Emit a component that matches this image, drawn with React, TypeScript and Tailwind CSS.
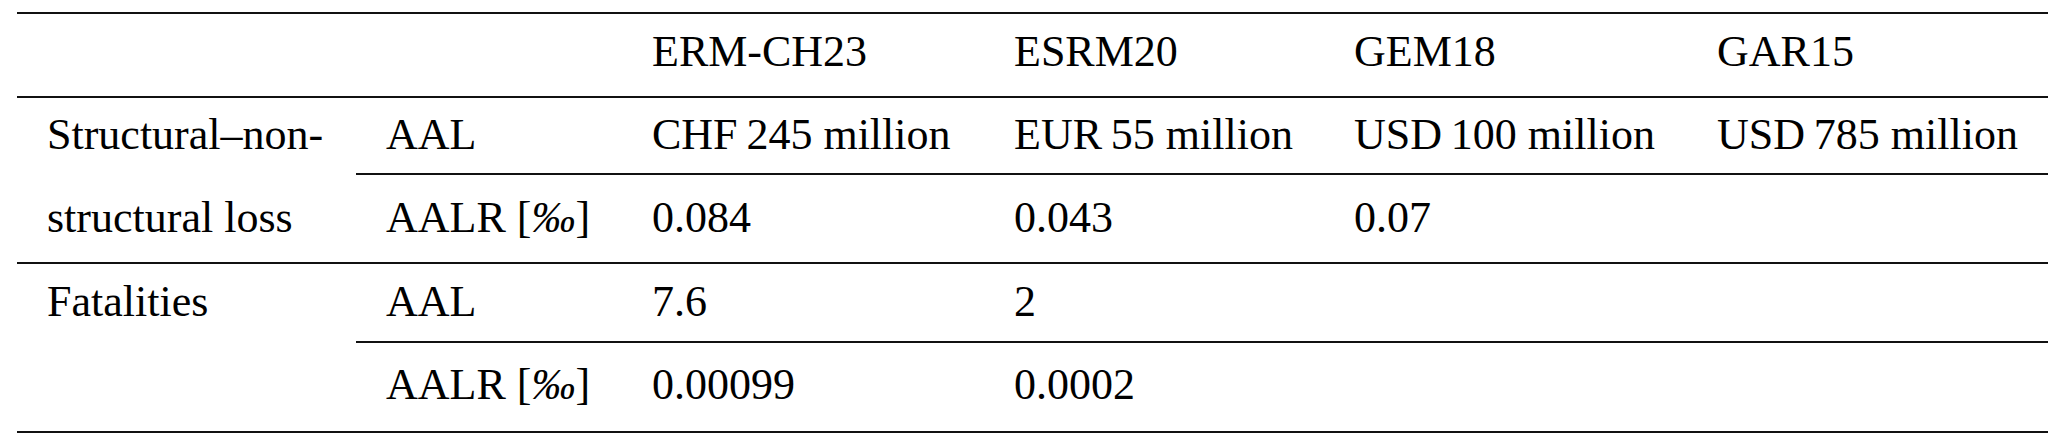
const cols = 'grid grid-cols-[339px_266px_362px_340px_363px_361px]';

type Row = {
  cells: string[];
  full: boolean;
  h: string;
  pt: string;
};

const rows: Row[] = [
  { cells: ['', '', 'ERM-CH23', 'ESRM20', 'GEM18', 'GAR15'], full: true, h: 'h-[84px]', pt: 'pt-[16px]' },
  {
    cells: ['Structural–non-', 'AAL', 'CHF\u2009245 million', 'EUR\u200955 million', 'USD\u2009100 million', 'USD\u2009785 million'],
    full: true,
    h: 'h-[77px]',
    pt: 'pt-[15px]',
  },
  { cells: ['structural loss', 'AALR [‰]', '0.084', '0.043', '0.07', ''], full: false, h: 'h-[89px]', pt: 'pt-[21px]' },
  { cells: ['Fatalities', 'AAL', '7.6', '2', '', ''], full: true, h: 'h-[79px]', pt: 'pt-[16px]' },
  { cells: ['', 'AALR [‰]', '0.00099', '0.0002', '', ''], full: false, h: 'h-[90px]', pt: 'pt-[20px]' },
];

function Cell({ text }: { text: string }) {
  if (text.includes('‰')) {
    const [before, after] = text.split('‰');
    return (
      <>
        {before}
        <span className="italic">‰</span>
        {after}
      </>
    );
  }
  return <>{text}</>;
}

export default function App() {
  return (
    <div className="w-[2067px] h-[444px] bg-white pt-[12px] pl-[17px] text-black font-['Liberation_Serif','Times_New_Roman','DejaVu_Serif',serif] text-[44px] leading-[44px]">
      <div className="w-[2031px]">
        {rows.map((row, i) => {
          const last = i === rows.length - 1;
          return (
            <div key={i} className={cols}>
              {row.cells.map((c, j) => {
                const line = row.full || j > 0;
                return (
                  <div
                    key={j}
                    className={`${last ? 'h-[92px] border-b-2 border-b-[#111]' : row.h} ${row.pt} pl-[30px] whitespace-nowrap border-t-2 ${
                      line ? 'border-t-[#111]' : 'border-t-transparent'
                    }`}
                  >
                    <Cell text={c} />
                  </div>
                );
              })}
            </div>
          );
        })}
      </div>
    </div>
  );
}
